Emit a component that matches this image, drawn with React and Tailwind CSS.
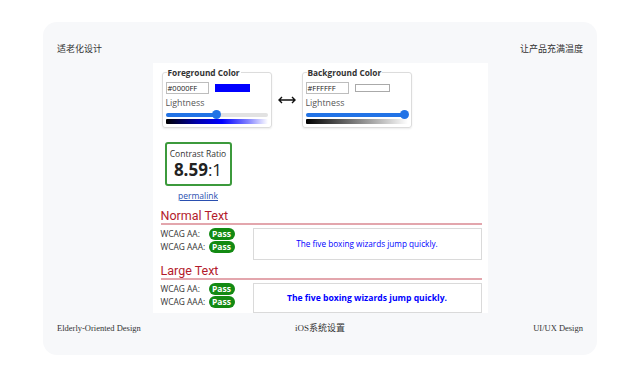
import React from "react";

const serif = { fontFamily: '"Liberation Serif", "Noto Sans CJK SC", serif' };

function Slider({ pct }) {
  return (
    <div className="relative h-[9px] flex items-center">
      <div className="w-full h-[4px] rounded-full bg-[#e2e2e2] overflow-hidden flex">
        <div className="h-full bg-[#2273e6]" style={{ width: pct + "%" }} />
      </div>
      <div
        className="absolute w-[9px] h-[9px] rounded-full bg-[#2273e6]"
        style={{ left: `calc(${pct}% - 4.5px)` }}
      />
    </div>
  );
}

function ColorSet({ title, hex, swatchClass, pct, gradient }) {
  return (
    <fieldset className="border border-[#dcdcdc] rounded-[3px] shadow-[0_1px_2px_rgba(0,0,0,0.08)] w-[110px] h-[61px] px-[3px] pb-[3px]">
      <legend className="px-[1px] ml-[1px] text-[8.3px] font-bold text-[#333] leading-[11px]">{title}</legend>
      <div className="flex items-center gap-[6px] mt-[4px]">
        <div className="w-[43px] h-[12px] border border-[#bdbdbd] text-[7.5px] leading-[10px] pl-[1px] text-[#222]">{hex}</div>
        <div className={"w-[35px] h-[8px] " + swatchClass} />
      </div>
      <div className="text-[8.8px] text-[#555] leading-[11px] mt-[4px]">Lightness</div>
      <div className="mt-[1px]">
        <Slider pct={pct} />
      </div>
      <div className="h-[5px] mt-[0px] rounded-[1px]" style={{ background: gradient }} />
    </fieldset>
  );
}

function Pass() {
  return (
    <span className="inline-flex items-center justify-center w-[26px] h-[12px] rounded-full bg-[#138a13] text-white text-[8.5px] font-bold leading-none">
      Pass
    </span>
  );
}

function Section({ title, bold }) {
  return (
    <div className="pl-[8px] pr-[6px]">
      <div className="text-[12.5px] leading-[15px] text-[#b31b2c]" style={{ fontFamily: 'Roboto, "Open Sans", sans-serif' }}>
        {title}
      </div>
      <div className="h-[2px] bg-[#e3a6ad]" />
      <div className="flex mt-[3px]">
        <div className="w-[92px] flex flex-col gap-[1px] text-[8.4px] text-[#333]">
          <div className="flex items-center h-[12px]">
            <span className="w-[48px]">WCAG AA:</span>
            <Pass />
          </div>
          <div className="flex items-center h-[12px]">
            <span className="w-[48px]">WCAG AAA:</span>
            <Pass />
          </div>
        </div>
        <div
          className={
            "flex-1 border border-[#dadada] flex items-center justify-center text-[#0000ff] " +
            (bold ? "h-[30px] text-[8.6px] font-bold" : "h-[32px] text-[8.2px]")
          }
        >
          The five boxing wizards jump quickly.
        </div>
      </div>
    </div>
  );
}

export default function App() {
  return (
    <div className="w-[640px] h-[377px] bg-white pt-[22px] px-[43px]">
      <div className="h-[333px] bg-[#f7f8fa] rounded-[14px] px-[14px] pt-[21px] flex flex-col">
        <div className="flex justify-between text-[9px] leading-[12px] text-[#333]" style={serif}>
          <span>适老化设计</span>
          <span>让产品充满温度</span>
        </div>
        <div
          className="mt-[8px] mx-auto w-[335px] h-[250px] bg-white flex flex-col"
          style={{ fontFamily: '"Open Sans", "Noto Sans", sans-serif' }}
        >
          <div className="flex items-center pl-[9px] pt-[4px] gap-[6px]">
            <ColorSet
              title="Foreground Color"
              hex="#0000FF"
              swatchClass="bg-[#0000ff]"
              pct={50}
              gradient="linear-gradient(to right, #000 0%, #0000aa 30%, #0000ff 55%, #8080ff 80%, #fff 100%)"
            />
            <svg width="18" height="8" viewBox="0 0 18 8" className="mt-[4px]">
              <path d="M1 4 H17 M4 1 L1 4 L4 7 M14 1 L17 4 L14 7" stroke="#111" strokeWidth="1.4" fill="none" />
            </svg>
            <ColorSet
              title="Background Color"
              hex="#FFFFFF"
              swatchClass="bg-white border border-[#aaa]"
              pct={97}
              gradient="linear-gradient(to right, #000 0%, #808080 50%, #fff 100%)"
            />
          </div>
          <div className="ml-[12px] mt-[14px] w-[67px] flex flex-col items-center">
            <div className="w-[67px] h-[44px] border-2 border-[#3c9a3c] rounded-[3px] flex flex-col items-center justify-center">
              <div className="text-[8.5px] leading-[11px] text-[#333]">Contrast Ratio</div>
              <div className="text-[17px] leading-[21px] text-[#222]">
                <span className="font-bold">8.59</span>:1
              </div>
            </div>
            <a className="mt-[4px] text-[8.5px] leading-[12px] text-[#2a4fb0] underline">permalink</a>
          </div>
          <div className="mt-[6px]">
            <Section title="Normal Text" />
          </div>
          <div className="mt-[3px]">
            <Section title="Large Text" bold />
          </div>
        </div>
        <div className="mt-[9px] flex justify-between items-center text-[8.5px] leading-[12px] text-[#333]" style={serif}>
          <span className="w-[120px]">Elderly-Oriented Design</span>
          <span className="text-[9px]">iOS系统设置</span>
          <span className="w-[120px] text-right">UI/UX Design</span>
        </div>
      </div>
    </div>
  );
}
